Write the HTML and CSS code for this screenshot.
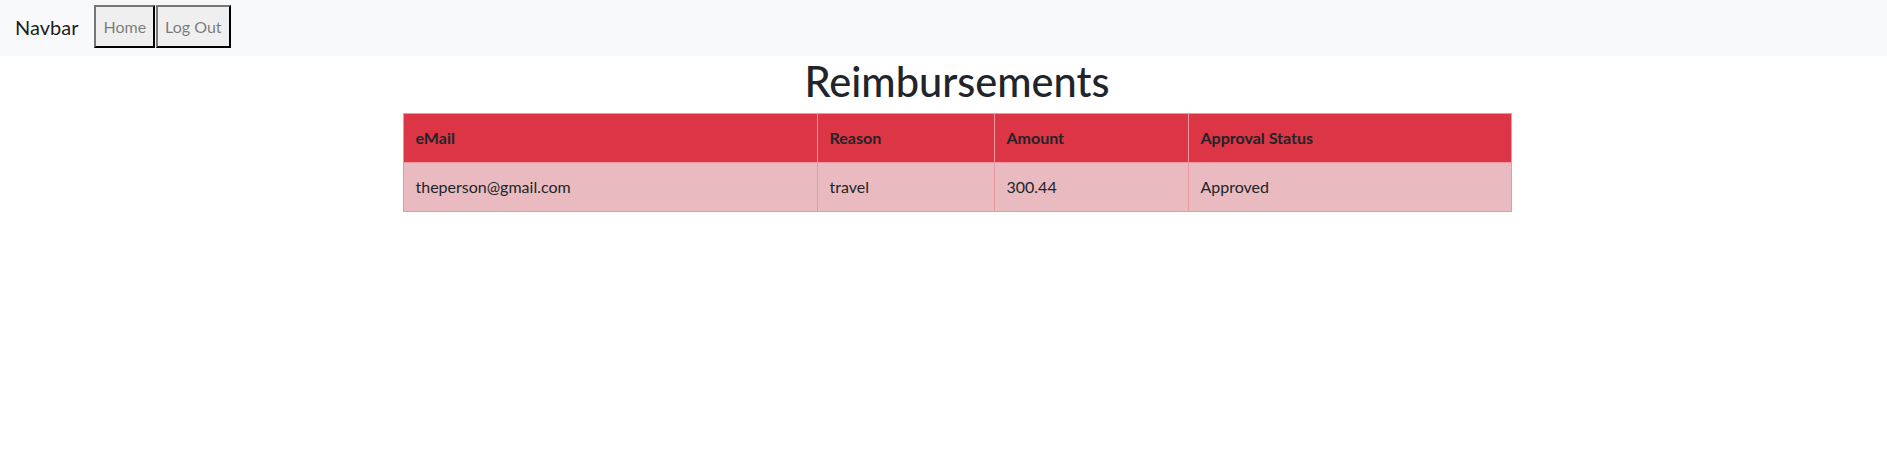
FILE: index.html
```html
<!DOCTYPE html>
<html lang="en">
<head>
    <meta charset="UTF-8">
    <title>Reimbursements</title>
    <link rel="stylesheet" href="styles.css">
</head>
<body>

<!-- Top Navbar -->
<nav class="navbar">
    <span class="navbar-brand">Navbar</span>
    <button class="nav-btn">Home</button>
    <button class="nav-btn">Log Out</button>
</nav>

<div class="container">
    <h1 class="title">Reimbursements</h1>
    <table class="reimb-table">
        <thead>
            <tr>
                <th class="col-email">eMail</th>
                <th class="col-reason">Reason</th>
                <th class="col-amount">Amount</th>
                <th class="col-status">Approval Status</th>
            </tr>
        </thead>
        <tbody>
            <tr>
                <td>theperson@gmail.com</td>
                <td>travel</td>
                <td>300.44</td>
                <td>Approved</td>
            </tr>
        </tbody>
    </table>
</div>

</body>
</html>
```

FILE: styles.css
```css
body {
    margin: 0;
    font-family: "Segoe UI", Lato, "Noto Sans", sans-serif;
    font-size: 16px;
    color: #212529;
    background-color: #fff;
}

/* Navbar */
.navbar {
    display: flex;
    align-items: center;
    height: 56px;
    padding: 0 16px 3px 15px;
    box-sizing: border-box;
    background-color: #f8f9fa;
}

.navbar-brand {
    font-size: 20px;
    color: rgba(0, 0, 0, 0.9);
    margin-right: 16px;
}

.nav-btn {
    height: 43px;
    margin: 0;
    padding: 0 7px;
    font-family: inherit;
    font-size: 16px;
    color: rgba(0, 0, 0, 0.5);
    background-color: #efefef;
    border: 2px outset #767676;
    border-color: #767676 #2b2b2b #2b2b2b #767676;
}

.nav-btn + .nav-btn {
    margin-left: 1px;
}

/* Page content */
.container {
    width: 1109px;
    margin: 0 auto;
    padding-left: 27px;
}

.title {
    margin: 1px 0 8px;
    font-size: 41.5px;
    font-weight: 500;
    line-height: 48px;
    text-align: center;
}

/* Table */
.reimb-table {
    width: 1104px;
    border-collapse: collapse;
    table-layout: fixed;
}

.reimb-table th,
.reimb-table td {
    padding: 12px;
    line-height: 24px;
    text-align: left;
    border: 1px solid #ed969e;
}

.reimb-table th {
    font-weight: bold;
    background-color: #dc3545;
}

.reimb-table td {
    background-color: #e9bbc0;
}

.col-email { width: 389px; }
.col-reason { width: 152px; }
.col-amount { width: 169px; }
.col-status { width: 298px; }
```
